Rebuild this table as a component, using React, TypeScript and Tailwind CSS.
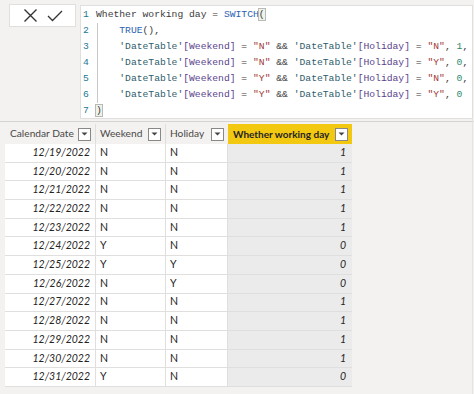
import React from "react";

const rows: [string, string, string, string][] = [
  ["12/19/2022", "N", "N", "1"],
  ["12/20/2022", "N", "N", "1"],
  ["12/21/2022", "N", "N", "1"],
  ["12/22/2022", "N", "N", "1"],
  ["12/23/2022", "N", "N", "1"],
  ["12/24/2022", "Y", "N", "0"],
  ["12/25/2022", "Y", "Y", "0"],
  ["12/26/2022", "N", "Y", "0"],
  ["12/27/2022", "N", "N", "1"],
  ["12/28/2022", "N", "N", "1"],
  ["12/29/2022", "N", "N", "1"],
  ["12/30/2022", "N", "N", "1"],
  ["12/31/2022", "Y", "N", "0"],
];

const T = ({ c }: { c: string }) => <span className="text-[#2f5d6b]">{c}</span>;
const Col = ({ c }: { c: string }) => <span className="text-[#5b3f8c]">{c}</span>;
const S = ({ c }: { c: string }) => <span className="text-[#a33a3a]">{c}</span>;
const Nm = ({ c }: { c: string }) => <span className="text-[#2d8a6a]">{c}</span>;
const P = ({ c }: { c: string }) => <span className="text-[#3b3b3b]">{c}</span>;

function CaseLine({ w, h, v, last }: { w: string; h: string; v: string; last?: boolean }) {
  return (
    <>
      <P c="    " />
      <T c="'DateTable'" />
      <Col c="[Weekend]" />
      <P c=" = " />
      <S c={`"${w}"`} />
      <P c=" && " />
      <T c="'DateTable'" />
      <Col c="[Holiday]" />
      <P c=" = " />
      <S c={`"${h}"`} />
      <P c=", " />
      <Nm c={v} />
      {!last && <P c="," />}
    </>
  );
}

function Dropdown() {
  return (
    <div className="w-[13px] h-[13px] border border-[#8a8886] bg-white flex items-center justify-center shrink-0">
      <svg width="7" height="4" viewBox="0 0 7 4">
        <path d="M0.5 0.5 L6.5 0.5 L3.5 3.5 Z" fill="#444" />
      </svg>
    </div>
  );
}

export default function App() {
  const lines: React.ReactNode[] = [
    <>
      <P c="Whether working day = " />
      <span className="text-[#2b63b5]">SWITCH</span>
      <span className="text-[#3b3b3b] outline outline-1 outline-[#b9b9b9] bg-[#eef3ea]">(</span>
    </>,
    <>
      <P c="    " />
      <span className="text-[#2b63b5]">TRUE</span>
      <P c="()," />
    </>,
    <CaseLine w="N" h="N" v="1" />,
    <CaseLine w="N" h="Y" v="0" />,
    <CaseLine w="Y" h="N" v="0" />,
    <CaseLine w="Y" h="Y" v="0" last />,
    <>
      <span className="text-[#3b3b3b] outline outline-1 outline-[#b9b9b9] bg-[#eef3ea]">)</span>
    </>,
  ];

  const mono = { fontFamily: '"Liberation Mono", monospace' };
  const sans = { fontFamily: 'Lato, "Noto Sans", sans-serif' };

  return (
    <div className="w-[474px] h-[394px] bg-[#f3f2f1] overflow-hidden relative" style={sans}>
      {/* formula bar */}
      <div className="flex pt-[4px] pl-[9px] h-[121px]">
        <div className="w-[67px] h-[23px] bg-white border border-[#e1dfdd] flex items-center justify-around px-[8px]">
          <svg width="15" height="15" viewBox="0 0 15 15">
            <path d="M1.5 1.5 L13.5 13.5 M13.5 1.5 L1.5 13.5" stroke="#333" strokeWidth="1.4" fill="none" />
          </svg>
          <svg width="16" height="12" viewBox="0 0 16 12">
            <path d="M1 6 L5.5 10.5 L15 1" stroke="#333" strokeWidth="1.3" fill="none" />
          </svg>
        </div>
        <div className="ml-[4px] mt-[1px] w-[393px] h-[114px] bg-white border border-[#e1dfdd] relative">
          <div className="absolute left-[16px] top-[17px] w-[1px] h-[80px] bg-[#c8c8c8]" />
          <div className="pt-[1px]" style={mono}>
            {lines.map((l, i) => (
              <div key={i} className="flex h-[16px] items-center text-[9.7px] whitespace-pre">
                <span className="w-[15px] pl-[2px] text-[#237893]">{i + 1}</span>
                <span>{l}</span>
              </div>
            ))}
          </div>
        </div>
      </div>

      {/* table */}
      <div className="border-t border-[#d6d4d2] pt-[2px] pl-[5px]">
        <div className="w-[347px] bg-white">
          <div className="flex h-[20px] bg-[#f3f2f1] text-[10.2px] text-[#4a4846] whitespace-nowrap">
            <div className="w-[91px] flex items-center justify-between pl-[5px] pr-[4px] border-r border-[#e1dfdd]">
              <span>Calendar Date</span>
              <Dropdown />
            </div>
            <div className="w-[70px] flex items-center justify-between pl-[4px] pr-[4px] border-r border-[#e1dfdd]">
              <span>Weekend</span>
              <Dropdown />
            </div>
            <div className="w-[62px] flex items-center justify-between pl-[4px] pr-[4px]">
              <span>Holiday</span>
              <Dropdown />
            </div>
            <div className="w-[124px] flex items-center justify-between pl-[5px] pr-[4px] bg-[#f2c811] font-bold text-[#252423] text-[10px]">
              <span>Whether working day</span>
              <Dropdown />
            </div>
          </div>
          {rows.map((r, i) => (
            <div key={i} className="flex h-[18.7px] text-[10.5px] text-[#252423] border-b border-[#e1dfdd] whitespace-nowrap">
              <div className="w-[91px] flex items-center justify-end pr-[5px] italic border-r border-[#e1dfdd]">{r[0]}</div>
              <div className="w-[70px] flex items-center pl-[4px] border-r border-[#e1dfdd]">{r[1]}</div>
              <div className="w-[62px] flex items-center pl-[4px] border-r border-[#e1dfdd]">{r[2]}</div>
              <div className="w-[124px] flex items-center justify-end pr-[6px] italic bg-[#ebebeb]">{r[3]}</div>
            </div>
          ))}
        </div>
      </div>
      <div className="absolute right-[1px] top-[118px] w-[1px] h-[276px] bg-[#e6e4e2]" />
    </div>
  );
}
